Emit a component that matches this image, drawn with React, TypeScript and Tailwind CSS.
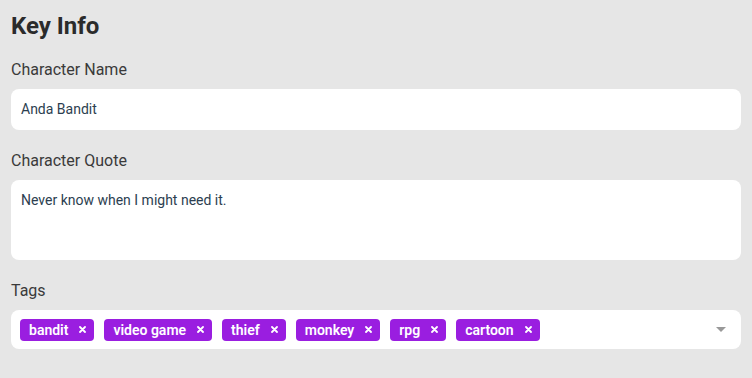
import React from 'react'

const tags = ['bandit', 'video game', 'thief', 'monkey', 'rpg', 'cartoon']

function RemoveIcon() {
  return (
    <svg width="7" height="7" viewBox="0 0 7 7" className="shrink-0">
      <path d="M1 1 L6 6 M6 1 L1 6" stroke="white" strokeWidth="1.8" strokeLinecap="round" />
    </svg>
  )
}

function Tag({ label }: { label: string }) {
  return (
    <span className="flex h-[22px] items-center gap-[11px] rounded-[4px] bg-[#9a1ee0] pl-[9px] pr-[8px] text-[14px] font-semibold leading-none text-white">
      {label}
      <RemoveIcon />
    </span>
  )
}

export default function App() {
  return (
    <div
      className="min-h-screen bg-[#e6e6e6] px-[11px] pt-[12px] text-[#333]"
      style={{ fontFamily: 'Roboto, "Noto Sans", sans-serif' }}
    >
      <h1 className="h-[28px] text-[24px] font-bold leading-[28px] text-[#2b2b2b]">Key Info</h1>

      <label className="mt-[20px] block text-[16px] leading-[20px] text-[#3a3a3a]">Character Name</label>
      <div className="mt-[9px] flex h-[41px] items-center rounded-[8px] bg-white px-[10px] text-[14px] text-[#2c3e50]">
        Anda Bandit
      </div>

      <label className="mt-[21px] block text-[16px] leading-[20px] text-[#3a3a3a]">Character Quote</label>
      <div className="mt-[9px] h-[80px] rounded-[8px] bg-white p-[10px] text-[14px] leading-[20px] text-[#2c3e50]">
        Never know when I might need it.
      </div>

      <label className="mt-[21px] block text-[16px] leading-[20px] text-[#3a3a3a]">Tags</label>
      <div className="mt-[9px] flex h-[39px] items-center rounded-[8px] bg-white pl-[9px] pr-[15px]">
        <div className="flex flex-1 items-center gap-[10px]">
          {tags.map((t) => (
            <Tag key={t} label={t} />
          ))}
        </div>
        <svg width="10" height="5" viewBox="0 0 10 5">
          <path d="M0 0 L10 0 L5 5 Z" fill="#999" />
        </svg>
      </div>
    </div>
  )
}
